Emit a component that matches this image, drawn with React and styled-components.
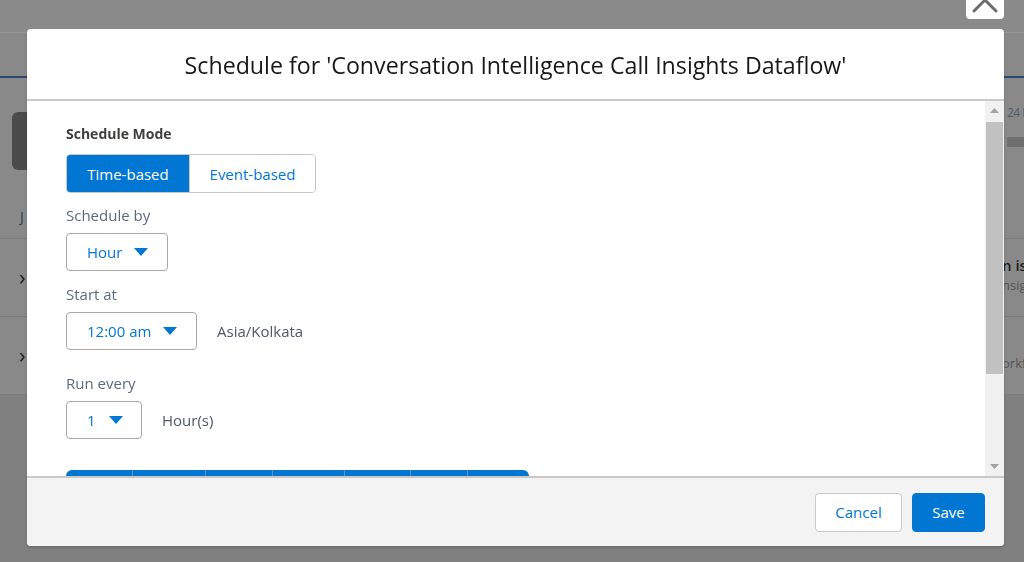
import React from 'react';
import styled, { createGlobalStyle } from 'styled-components';

const GlobalStyle = createGlobalStyle`
  html, body {
    margin: 0;
    padding: 0;
    width: 1024px;
    height: 562px;
    overflow: hidden;
    font-family: "Open Sans", "Noto Sans", Arial, sans-serif;
  }
`;

const BLUE = '#0176d3';

/* ---------- dimmed page behind the modal ---------- */

const Page = styled.div`
  width: 1024px;
  height: 562px;
  background: #808080;
  display: flex;
  flex-direction: column;
  overflow: hidden;
`;

const TopBar = styled.div`
  height: 32px;
  flex: none;
  background: #8a8a8a;
  border-bottom: 1px solid #979797;
`;

const TabStrip = styled.div`
  height: 43px;
  flex: none;
  background: #898989;
  border-bottom: 2px solid #2c4a6d;
`;

const PageBody = styled.div`
  background: #898989;
  display: flex;
  flex-direction: column;
`;

const RecordHeader = styled.div`
  height: 117px;
  display: flex;
  justify-content: space-between;
  padding: 34px 0 0 12px;
  box-sizing: border-box;
`;

const IconTile = styled.div`
  width: 58px;
  height: 58px;
  border-radius: 6px;
  background: #4b4b4b;
  display: flex;
  align-items: center;
  justify-content: center;
`;

const IconGlyph = styled.div`
  width: 24px;
  height: 30px;
  border-radius: 3px;
  background: #8e8e8e;
`;

const SideStats = styled.div`
  width: 17px;
  margin-top: -8px;
  overflow: hidden;
  display: flex;
  flex-direction: column;
  gap: 16px;
`;

const SideText = styled.div`
  font-size: ${p => p.$size || 13}px;
  color: ${p => p.$color || '#4e5a6b'};
  font-weight: ${p => (p.$bold ? 600 : 400)};
  white-space: nowrap;
  line-height: 17px;
  letter-spacing: ${p => p.$tight ? '-0.5px' : 'normal'};
`;

const SideBar = styled.div`
  height: 10px;
  background: #6f6f6f;
`;

const ColumnHead = styled.div`
  height: 43px;
  border-bottom: 1px solid #7c7c7c;
  padding-left: 20px;
  display: flex;
  align-items: center;
  font-size: 14px;
  color: #2c3d55;
`;

const Row = styled.div`
  height: 77px;
  border-bottom: 1px solid #7c7c7c;
  display: flex;
  align-items: center;
  justify-content: space-between;
  padding-left: 19px;
`;

const Chevron = styled.span`
  font-size: 22px;
  color: #1d1d1d;
  line-height: 1;
  margin-top: -4px;
`;

const RowSide = styled.div`
  width: 22px;
  overflow: hidden;
  display: flex;
  flex-direction: column;
  gap: 3px;
  margin-top: ${p => p.$offset || 0}px;
`;

/* ---------- modal ---------- */

const Modal = styled.div`
  position: fixed;
  top: 29px;
  left: 27px;
  width: 977px;
  height: 517px;
  background: #fff;
  border-radius: 4px;
  display: flex;
  flex-direction: column;
  box-shadow: 0 2px 3px rgba(0, 0, 0, 0.16);
`;

const CloseButton = styled.button`
  position: absolute;
  top: -48px;
  right: 0;
  width: 38px;
  height: 38px;
  border: none;
  border-radius: 4px;
  background: #fff;
  padding: 0;
  display: flex;
  align-items: center;
  justify-content: center;
`;

const Header = styled.div`
  height: 72px;
  flex: none;
  box-sizing: border-box;
  border-bottom: 2px solid #c9c9c9;
  display: flex;
  align-items: center;
  justify-content: center;
  font-size: 23.2px;
  color: #181818;
  padding-top: 2px;
`;

const Body = styled.div`
  height: 375px;
  flex: none;
  display: flex;
`;

const Content = styled.div`
  flex: 1;
  overflow: hidden;
  padding: 22px 0 0 39px;
  display: flex;
  flex-direction: column;
  align-items: flex-start;

  & > * {
    flex: none;
  }
`;

const SectionTitle = styled.div`
  font-size: 14px;
  font-weight: 700;
  color: #3e3e3c;
  line-height: 22px;
  margin-bottom: 9px;
`;

const Toggle = styled.div`
  display: flex;
  border: 1px solid #c9c9c9;
  border-radius: 4px;
  overflow: hidden;
  height: 39px;
  box-sizing: border-box;
`;

const ToggleOption = styled.button`
  border: none;
  border-left: ${p => (p.$first ? 'none' : '1px solid #c9c9c9')};
  background: ${p => (p.$active ? BLUE : '#fff')};
  color: ${p => (p.$active ? '#fff' : BLUE)};
  font-family: inherit;
  font-size: 15px;
  padding: 0;
  width: ${p => p.$width}px;
`;

const Label = styled.div`
  font-size: 15px;
  color: #5c6a7e;
  line-height: 22px;
  margin-top: ${p => p.$top || 10}px;
  margin-bottom: 7px;
`;

const FieldRow = styled.div`
  display: flex;
  align-items: center;
  gap: 20px;
`;

const Select = styled.div`
  height: 38px;
  box-sizing: border-box;
  border: 1px solid #a9a9a9;
  border-radius: 4px;
  display: flex;
  align-items: center;
  gap: ${p => p.$gap || 12}px;
  padding: 0 0 0 20px;
  width: ${p => p.$width}px;
  font-size: 15px;
  color: ${BLUE};
`;

const Aside = styled.span`
  font-size: 15px;
  color: #4d5868;
`;

const Table = styled.div`
  margin-top: 31px;
  display: flex;
  border-radius: 6px 6px 0 0;
  overflow: hidden;
`;

const HeadCell = styled.div`
  width: ${p => p.$w}px;
  height: 34px;
  background: ${BLUE};
  border-left: ${p => (p.$first ? 'none' : '1px solid #6d8fb5')};
  box-sizing: border-box;
  flex: none;
`;

const ScrollTrack = styled.div`
  width: 19px;
  flex: none;
  background: #f1f1f1;
  display: flex;
  flex-direction: column;
  align-items: center;
`;

const ScrollArrow = styled.div`
  height: 19px;
  flex: none;
  display: flex;
  align-items: center;
  justify-content: center;
`;

const ScrollThumb = styled.div`
  width: 17px;
  height: 252px;
  flex: none;
  background: #c1c1c1;
  margin-top: 2px;
`;

const ScrollGap = styled.div`
  flex: 1;
`;

const Footer = styled.div`
  flex: 1;
  background: #f3f3f3;
  border-top: 2px solid #c9c9c9;
  border-radius: 0 0 4px 4px;
  display: flex;
  align-items: center;
  justify-content: flex-end;
  gap: 10px;
  padding-right: 19px;
`;

const Button = styled.button`
  height: 39px;
  border-radius: 4px;
  font-family: inherit;
  font-size: 15px;
  padding: 0;
  border: 1px solid ${p => (p.$brand ? BLUE : '#c9c9c9')};
  background: ${p => (p.$brand ? BLUE : '#fff')};
  color: ${p => (p.$brand ? '#fff' : BLUE)};
  width: ${p => p.$width}px;
`;

const Caret = () => (
  <svg width="14" height="8" viewBox="0 0 14 8">
    <polygon points="0,0 14,0 7,8" fill={BLUE} />
  </svg>
);

const Arrow = ({ up }) => (
  <svg width="9" height="5" viewBox="0 0 9 5">
    <polygon points={up ? '0,5 9,5 4.5,0' : '0,0 9,0 4.5,5'} fill="#a3a3a3" />
  </svg>
);

const headCells = [66, 73, 67, 72, 66, 57, 62];

export default function App() {
  return (
    <>
      <GlobalStyle />
      <Page>
        <TopBar />
        <TabStrip />
        <PageBody>
          <RecordHeader>
            <IconTile>
              <IconGlyph />
            </IconTile>
            <SideStats>
              <SideText $size={12} $tight>24 H</SideText>
              <SideBar />
            </SideStats>
          </RecordHeader>
          <ColumnHead>J</ColumnHead>
          <Row>
            <Chevron>›</Chevron>
            <RowSide $offset={-4}>
              <SideText $bold $size={15} $color="#1e1e1e">n is</SideText>
              <SideText $color="#555">nsig</SideText>
            </RowSide>
          </Row>
          <Row>
            <Chevron>›</Chevron>
            <RowSide $offset={16}>
              <SideText $color="#555">orkf</SideText>
            </RowSide>
          </Row>
        </PageBody>
      </Page>

      <Modal>
        <CloseButton aria-label="Close">
          <svg width="38" height="38" viewBox="0 0 38 38">
            <path d="M8 8 L30 30 M30 8 L8 30" stroke="#6b6b6b" strokeWidth="3" strokeLinecap="round" />
          </svg>
        </CloseButton>
        <Header>Schedule for 'Conversation Intelligence Call Insights Dataflow'</Header>
        <Body>
          <Content>
            <SectionTitle>Schedule Mode</SectionTitle>
            <Toggle>
              <ToggleOption $first $active $width={122}>Time-based</ToggleOption>
              <ToggleOption $width={126}>Event-based</ToggleOption>
            </Toggle>
            <Label $top={11}>Schedule by</Label>
            <Select $width={102}>
              Hour <Caret />
            </Select>
            <Label $top={12}>Start at</Label>
            <FieldRow>
              <Select $width={131}>
                12:00 am <Caret />
              </Select>
              <Aside>Asia/Kolkata</Aside>
            </FieldRow>
            <Label $top={22}>Run every</Label>
            <FieldRow>
              <Select $width={76} $gap={13}>
                1 <Caret />
              </Select>
              <Aside>Hour(s)</Aside>
            </FieldRow>
            <Table>
              {headCells.map((w, i) => (
                <HeadCell key={i} $w={w} $first={i === 0} />
              ))}
            </Table>
          </Content>
          <ScrollTrack>
            <ScrollArrow>
              <Arrow up />
            </ScrollArrow>
            <ScrollThumb />
            <ScrollGap />
            <ScrollArrow>
              <Arrow />
            </ScrollArrow>
          </ScrollTrack>
        </Body>
        <Footer>
          <Button $width={87}>Cancel</Button>
          <Button $brand $width={73}>Save</Button>
        </Footer>
      </Modal>
    </>
  );
}
